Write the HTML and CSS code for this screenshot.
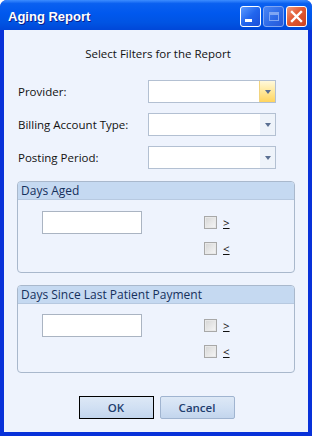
FILE: index.html
```html
<!DOCTYPE html>
<html lang="en">
<head>
	<meta charset="UTF-8">
	<title>Aging Report</title>
	<link rel="stylesheet" href="styles.css">
</head>
<body>
<div class="window">
	<div class="titlebar">
		<span class="title">Aging Report</span>
		<div class="title-buttons">
			<div class="tbtn tbtn-min"><span class="min-bar"></span></div>
			<div class="tbtn tbtn-max"><span class="max-box"></span></div>
			<div class="tbtn tbtn-close">
				<svg width="13" height="13" viewBox="0 0 13 13"><path d="M2 2 L11 11 M11 2 L2 11" stroke="#fff" stroke-width="2.4" stroke-linecap="square"/></svg>
			</div>
		</div>
	</div>

	<div class="content">
		<div class="heading">Select Filters for the Report</div>

		<div class="field-row">
			<label class="field-label">Provider:</label>
			<div class="combo">
				<div class="combo-text"></div>
				<div class="combo-btn combo-btn-hot"><span class="arrow"></span></div>
			</div>
		</div>
		<div class="field-row">
			<label class="field-label">Billing Account Type:</label>
			<div class="combo">
				<div class="combo-text"></div>
				<div class="combo-btn"><span class="arrow"></span></div>
			</div>
		</div>
		<div class="field-row">
			<label class="field-label">Posting Period:</label>
			<div class="combo">
				<div class="combo-text"></div>
				<div class="combo-btn"><span class="arrow"></span></div>
			</div>
		</div>

		<div class="group group-aged">
			<div class="group-header">Days Aged</div>
			<div class="group-body">
				<div class="textbox"></div>
				<div class="checks">
					<div class="check-row"><span class="checkbox"></span><span class="check-label">&gt;</span></div>
					<div class="check-row"><span class="checkbox"></span><span class="check-label">&lt;</span></div>
				</div>
			</div>
		</div>

		<div class="group group-payment">
			<div class="group-header">Days Since Last Patient Payment</div>
			<div class="group-body">
				<div class="textbox"></div>
				<div class="checks">
					<div class="check-row"><span class="checkbox"></span><span class="check-label">&gt;</span></div>
					<div class="check-row"><span class="checkbox"></span><span class="check-label">&lt;</span></div>
				</div>
			</div>
		</div>

		<div class="buttons">
			<button class="btn btn-default">OK</button>
			<button class="btn">Cancel</button>
		</div>
	</div>
</div>
</body>
</html>
```

FILE: styles.css
```css
html, body {
	margin: 0;
	padding: 0;
	background: #fff;
}
body {
	font-family: "Open Sans", "DejaVu Sans", sans-serif;
	font-size: 11.5px;
	color: #000;
}

.window {
	width: 312px;
	height: 436px;
	display: flex;
	flex-direction: column;
	background: #0831d9;
	border-radius: 7px 7px 0 0;
	overflow: hidden;
	box-sizing: border-box;
}

/* title bar */
.titlebar {
	height: 30px;
	flex: none;
	display: flex;
	align-items: center;
	justify-content: space-between;
	padding: 0 5px 0 8px;
	background: linear-gradient(#3d8dff 0%, #0a60f0 12%, #0058ee 45%, #0054e3 75%, #0047d8 100%);
}
.title {
	color: #fff;
	font-family: "Liberation Sans", Arial, sans-serif;
	font-weight: bold;
	font-size: 13px;
	text-shadow: 1px 1px 0 #0a1e8c;
	margin-top: 2px;
}
.title-buttons {
	display: flex;
	gap: 2px;
	margin-top: 2px;
}
.tbtn {
	width: 19px;
	height: 19px;
	border: 1px solid #fff;
	border-radius: 3px;
	display: flex;
	align-items: center;
	justify-content: center;
	position: relative;
}
.tbtn-min {
	background: linear-gradient(135deg, #5c9bff 0%, #2266ee 50%, #1c4fd8 100%);
}
.min-bar {
	position: absolute;
	left: 4px;
	bottom: 4px;
	width: 7px;
	height: 3px;
	background: #fff;
}
.tbtn-max {
	background: linear-gradient(135deg, #4a86f4 0%, #2c68e6 60%, #2758d6 100%);
	border-color: #7fa6f3;
}
.max-box {
	width: 10px;
	height: 9px;
	border: 1px solid #7fa6f3;
	border-top-width: 3px;
	box-sizing: border-box;
}
.tbtn-close {
	background: linear-gradient(135deg, #f09a7c 0%, #e25a33 45%, #cc4220 100%);
}

/* body */
.content {
	flex: 1;
	margin: 0 4px 4px 4px;
	background: #eef3fd;
	padding: 0 13px 0 13px;
	display: flex;
	flex-direction: column;
}
.heading {
	text-align: center;
	height: 20px;
	line-height: 20px;
	margin-top: 14px;
	margin-bottom: 16px;
	padding-left: 4px;
	color: #111;
}

.field-row {
	display: flex;
	align-items: center;
	height: 23px;
	margin-bottom: 10px;
}
.field-label {
	width: 130px;
	padding-left: 1px;
	color: #111;
}
.combo {
	display: flex;
	width: 128px;
	height: 23px;
	border: 1px solid #b3c0d2;
	box-sizing: border-box;
	background: #fff;
}
.combo-text {
	flex: 1;
}
.combo-btn {
	width: 15px;
	display: flex;
	align-items: center;
	justify-content: center;
	background: #eef3fa;
}
.combo-btn-hot {
	background: linear-gradient(#fff9dc 0%, #ffe89a 50%, #ffd45e 100%);
	border-left: 1px solid #f2d47e;
}
.arrow {
	width: 0;
	height: 0;
	border-left: 3.5px solid transparent;
	border-right: 3.5px solid transparent;
	border-top: 4px solid #5a6f92;
}

/* group boxes */
.group {
	border: 1px solid #a9b8cc;
	border-radius: 4px;
	display: flex;
	flex-direction: column;
	overflow: hidden;
	box-sizing: border-box;
}
.group-aged {
	height: 92px;
	margin-top: 2px;
}
.group-payment {
	height: 88px;
	margin-top: 12px;
}
.group-header {
	height: 17px;
	line-height: 17px;
	background: #c5d9f1;
	border-bottom: 1px solid #b7c9e0;
	color: #15305c;
	padding-left: 3px;
	font-size: 12px;
}
.group-body {
	display: flex;
	align-items: flex-start;
	padding-left: 24px;
	padding-top: 11px;
}
.group-payment .group-body {
	padding-top: 10px;
}
.textbox {
	width: 100px;
	height: 23px;
	border: 1px solid #aab4c2;
	box-sizing: border-box;
	background: #fff;
}
.checks {
	display: flex;
	flex-direction: column;
	gap: 13px;
	margin-left: 62px;
	margin-top: 5px;
}
.check-row {
	display: flex;
	align-items: center;
	height: 13px;
}
.checkbox {
	width: 13px;
	height: 13px;
	box-sizing: border-box;
	border: 1px solid #a8a8a8;
	background: linear-gradient(135deg, #d4d4d4 0%, #e6e6e6 50%, #f6f6f6 100%);
	box-shadow: inset 0 0 0 1px #e8e8e8;
}
.check-label {
	margin-left: 6px;
	text-decoration: underline;
	font-size: 11.5px;
	color: #111;
}

/* buttons */
.buttons {
	display: flex;
	justify-content: center;
	gap: 6px;
	margin-top: 23px;
	padding-left: 1px;
}
.btn {
	width: 75px;
	height: 23px;
	font-family: "Open Sans", "DejaVu Sans", sans-serif;
	font-size: 11.5px;
	font-weight: 600;
	color: #1e3d6e;
	background: linear-gradient(#dde8f6 0%, #d1e0f3 50%, #c3d5ed 100%);
	border: 1px solid #a0b4d0;
	border-radius: 2px;
	padding: 0;
}
.btn-default {
	border: 1px solid #000;
	border-radius: 0;
}
```
